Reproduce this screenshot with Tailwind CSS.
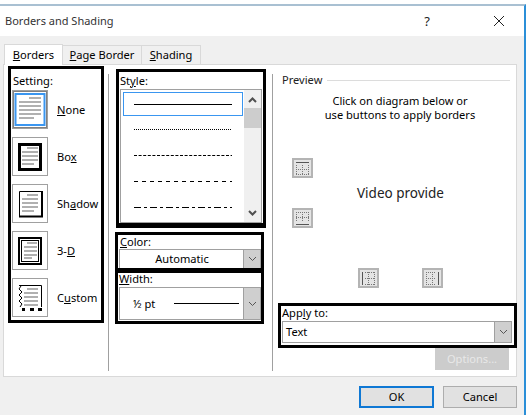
<!DOCTYPE html>
<html lang="en">
  <head>
    <meta charset="UTF-8" />
    <title>Borders and Shading</title>
    <script src="https://cdn.jsdelivr.net/npm/@tailwindcss/browser@4"></script>
  </head>
  <body class="bg-white overflow-hidden font-['Noto_Sans',sans-serif] text-[11.1px] leading-[14px] text-black">
    <div class="w-[527px] h-[415px] pt-[4px] overflow-hidden">
      <div class="w-[526px] h-[411px] border-t-2 border-r-2 border-t-[#a9c0d2] border-r-[#2b8fd8] flex flex-col">
        <!-- title bar -->
        <div class="h-[30px] flex items-center pl-[5px] bg-white shrink-0">
          <span class="text-[#333] text-[11px]">Borders and Shading</span>
          <span class="ml-auto mr-[63px] text-[#222] text-[13px]">?</span>
          <svg class="mr-[19px]" width="12" height="12" viewBox="0 0 12 12"><path d="M1 1 11 11M11 1 1 11" stroke="#222" stroke-width="1" fill="none" /></svg>
        </div>

        <div class="flex-1 bg-[#f0f0f0] flex flex-col">
          <!-- tabs -->
          <div class="h-[28px] flex items-end pl-[4px] shrink-0">
            <div class="w-[59px] h-[21px] bg-white border border-b-0 border-[#d9d9d9] flex items-center justify-center relative top-px z-10"><span><u>B</u>orders</span></div>
            <div class="w-[79px] h-[19px] border border-b-0 border-l-0 border-[#d9d9d9] flex items-center justify-center"><span><u>P</u>age Border</span></div>
            <div class="w-[59px] h-[19px] border border-b-0 border-l-0 border-[#d9d9d9] flex items-center justify-center"><span><u>S</u>hading</span></div>
          </div>

          <!-- panel -->
          <div class="ml-[3px] w-[514px] h-[313px] bg-white border border-[#d9d9d9] flex shrink-0">
            <!-- setting -->
            <div class="ml-[4px] mt-[1px] w-[96px] h-[257px] border-[3px] border-black px-[1px] shrink-0">
              <div class="h-[14px] mt-[5px] ml-[1px]">Setting:</div>
              <div class="mt-[2px] flex flex-col gap-[8px]">
                <div class="flex items-center">
                  <div class="w-[36px] h-[39px] border border-[#a0a0a0] bg-white">
                    <svg width="34" height="37" viewBox="0 0 34 37">
                      <rect x="0.5" y="0.5" width="33" height="36" fill="none" stroke="#000" stroke-dasharray="1 1" />
                      <rect x="2.5" y="3" width="29" height="31" fill="none" stroke="#3a96f0" stroke-width="2" />
                      <path d="M16 7h12M6 11h22M6 15h22M6 19h22M6 23h22M6 27h15" stroke="#b0b0b0" stroke-width="2" />
                    </svg>
                  </div>
                  <span class="ml-[9px]"><u>N</u>one</span>
                </div>
                <div class="flex items-center">
                  <div class="w-[36px] h-[39px] border border-[#a0a0a0] bg-white">
                    <svg width="34" height="37" viewBox="0 0 34 37">
                      <rect x="6.5" y="6.5" width="21" height="25" fill="none" stroke="#000" stroke-width="3" />
                      <path d="M14 10h11M9 14h16M9 18h16M9 22h16M9 26h12" stroke="#b0b0b0" stroke-width="2" />
                    </svg>
                  </div>
                  <span class="ml-[9px]">Bo<u>x</u></span>
                </div>
                <div class="flex items-center">
                  <div class="w-[36px] h-[39px] border border-[#a0a0a0] bg-white">
                    <svg width="34" height="37" viewBox="0 0 34 37">
                      <path d="M6.5 31V6.5H28" fill="none" stroke="#000" />
                      <path d="M6 31.5H29V6" fill="none" stroke="#000" stroke-width="2" />
                      <path d="M14 10h11M9 14h16M9 18h16M9 22h16M9 26h12" stroke="#b0b0b0" stroke-width="2" />
                    </svg>
                  </div>
                  <span class="ml-[9px]">Sh<u>a</u>dow</span>
                </div>
                <div class="flex items-center">
                  <div class="w-[36px] h-[39px] border border-[#a0a0a0] bg-white">
                    <svg width="34" height="37" viewBox="0 0 34 37">
                      <rect x="6" y="6" width="22" height="26" fill="none" stroke="#000" stroke-width="2" />
                      <rect x="8.5" y="8.5" width="17" height="21" fill="none" stroke="#000" />
                      <path d="M14 11h10M11 15h13M11 19h13M11 23h13M11 26h8" stroke="#b0b0b0" stroke-width="2" />
                    </svg>
                  </div>
                  <span class="ml-[9px]">3-<u>D</u></span>
                </div>
                <div class="flex items-center">
                  <div class="w-[36px] h-[39px] border border-[#a0a0a0] bg-white">
                    <svg width="34" height="37" viewBox="0 0 34 37">
                      <path d="M6 6.5H28.5V28" fill="none" stroke="#000" />
                      <path d="M8 7l-2 3 3 3-3 3 3 3-3 3 3 3-2 3" fill="none" stroke="#000" />
                      <path d="M9 29h3v3H9zM17 29h4v3h-4zM25 29h4v3h-4z" fill="#000" />
                      <path d="M14 10h11M11 14h14M11 18h14M11 22h14M11 26h14" stroke="#b0b0b0" stroke-width="2" />
                    </svg>
                  </div>
                  <span class="ml-[9px]">C<u>u</u>stom</span>
                </div>
              </div>
            </div>

            <div class="ml-[4px] mt-[9px] w-px h-[297px] bg-[#a0a0a0] shrink-0"></div>

            <!-- style, color, width -->
            <div class="ml-[6px] w-[151px] shrink-0">
              <div class="ml-[1px] mt-[4px] w-[150px] h-[159px] border-[3px] border-b-[5px] border-black px-[1px]">
                <div class="h-[14px] mt-[2px]">St<u>y</u>le:</div>
                <div class="mt-[1px] h-[134px] w-[142px] border border-[#a0a0a0] flex">
                  <div class="w-[123px] shrink-0 pt-[2px] pl-[2px]">
                    <div class="w-[120px] h-[24px] border border-[#3a96f0] flex items-center justify-center">
                      <svg width="98" height="1"><line x1="0" y1="0.5" x2="98" y2="0.5" stroke="#000" /></svg>
                    </div>
                    <div class="h-[26px] flex items-center justify-center w-[120px]">
                      <svg width="98" height="1"><line x1="0" y1="0.5" x2="98" y2="0.5" stroke="#000" stroke-dasharray="1 1" /></svg>
                    </div>
                    <div class="h-[26px] flex items-center justify-center w-[120px]">
                      <svg width="98" height="1"><line x1="0" y1="0.5" x2="98" y2="0.5" stroke="#000" stroke-dasharray="3 1.6" /></svg>
                    </div>
                    <div class="h-[26px] flex items-center justify-center w-[120px]">
                      <svg width="98" height="1"><line x1="0" y1="0.5" x2="98" y2="0.5" stroke="#000" stroke-dasharray="4 4" /></svg>
                    </div>
                    <div class="h-[26px] flex items-center justify-center w-[120px]">
                      <svg width="98" height="1"><line x1="0" y1="0.5" x2="98" y2="0.5" stroke="#000" stroke-dasharray="7 3 3 3" /></svg>
                    </div>
                  </div>
                  <div class="flex-1 bg-[#f0f0f0] flex flex-col">
                    <div class="h-[18px] flex items-center justify-center pt-[2px]">
                      <svg width="9" height="6" viewBox="0 0 9 6"><path d="M1 5 4.5 1.5 8 5" fill="none" stroke="#505050" stroke-width="2" /></svg>
                    </div>
                    <div class="h-[20px] bg-[#cdcdcd]"></div>
                    <div class="flex-1"></div>
                    <div class="h-[17px] mb-[1px] flex items-center justify-center">
                      <svg width="9" height="6" viewBox="0 0 9 6"><path d="M1 1 4.5 4.5 8 1" fill="none" stroke="#505050" stroke-width="2" /></svg>
                    </div>
                  </div>
                </div>
              </div>
              <div class="mt-[4px] w-[149px] h-[36px] border-[3px] border-black border-b-0 pl-[1px]">
                <div class="h-[14px] ml-[1px]"><u>C</u>olor:</div>
                <div class="h-[19px] w-[142px] border border-b-0 border-[#a0a0a0] flex">
                  <div class="flex-1 text-center leading-[18px] pl-[1px]">Automatic</div>
                  <div class="w-[17px] bg-[#cfcfcf] border-l border-[#a0a0a0] flex items-center justify-center">
                    <svg width="9" height="6" viewBox="0 0 9 6"><path d="M1 1 4.5 4.5 8 1" fill="none" stroke="#555" /></svg>
                  </div>
                </div>
              </div>
              <div class="w-[149px] h-[56px] border-[3px] border-black border-t-[5px] pl-[1px]">
                <div class="h-[15px] -mt-[1px]"><u>W</u>idth:</div>
                <div class="h-[33px] w-[142px] border border-[#a0a0a0] flex items-center">
                  <span class="ml-[13px] w-[41px]">½ pt</span>
                  <svg width="65" height="1"><line x1="0" y1="0.5" x2="65" y2="0.5" stroke="#000" /></svg>
                  <div class="ml-auto h-full w-[17px] bg-[#cfcfcf] border-l border-[#a0a0a0] flex items-center justify-center">
                    <svg width="9" height="6" viewBox="0 0 9 6"><path d="M1 1 4.5 4.5 8 1" fill="none" stroke="#555" /></svg>
                  </div>
                </div>
              </div>
            </div>

            <div class="ml-[6px] mt-[9px] w-px h-[297px] bg-[#a0a0a0] shrink-0"></div>

            <!-- preview -->
            <div class="flex-1 min-w-0">
              <div class="ml-[9px] mt-[8px] flex items-center h-[14px] mr-[6px]">
                <span class="text-[#222]">Preview</span>
                <div class="ml-[5px] flex-1 h-px bg-[#dcdcdc]"></div>
              </div>
              <div class="text-center mt-[7px] leading-[14px] w-[238px] ml-[8px]">Click on diagram below or<br />use buttons to apply borders</div>
              <div class="flex mt-[36px]">
                <div class="ml-[19px] flex flex-col gap-[30px]">
                  <div class="w-[21px] h-[20px] border-2 border-[#b4b4b4] bg-[#e4e4e4] flex items-center justify-center">
                    <svg width="13" height="13" viewBox="0 0 13 13"><path d="M.5 3V13M6.5 3V13M12.5 3V13M0 7.5H13M0 12.5H13" fill="none" stroke="#777" stroke-dasharray="1 1" /><path d="M0 .5H13" stroke="#555" /></svg>
                  </div>
                  <div class="w-[21px] h-[20px] border-2 border-[#b4b4b4] bg-[#e4e4e4] flex items-center justify-center">
                    <svg width="13" height="13" viewBox="0 0 13 13"><path d="M.5 0V10M6.5 0V10M12.5 0V10M0 .5H13M0 5.5H13" fill="none" stroke="#777" stroke-dasharray="1 1" /><path d="M0 12.5H13" stroke="#555" /></svg>
                  </div>
                </div>
                <div class="w-[175px] text-center text-[13.5px] leading-[18px] mt-[26px] text-[#222]">Video provide</div>
              </div>
              <div class="flex mt-[40px] ml-[85px] gap-[43px]">
                <div class="w-[21px] h-[20px] border-2 border-[#b4b4b4] bg-[#e4e4e4] flex items-center justify-center">
                  <svg width="13" height="13" viewBox="0 0 13 13"><path d="M3 .5H13M3 12.5H13M12.5 0V13M6.5 0V13M3 6.5H13" fill="none" stroke="#777" stroke-dasharray="1 1" /><path d="M.5 0V13" stroke="#555" /></svg>
                </div>
                <div class="w-[21px] h-[20px] border-2 border-[#b4b4b4] bg-[#e4e4e4] flex items-center justify-center">
                  <svg width="13" height="13" viewBox="0 0 13 13"><path d="M0 .5H10M0 12.5H10M.5 0V13M6.5 0V13M0 6.5H10" fill="none" stroke="#777" stroke-dasharray="1 1" /><path d="M12.5 0V13" stroke="#555" /></svg>
                </div>
              </div>
              <div class="ml-[5px] mt-[15px] w-[239px] h-[45px] border-[3px] border-black pl-[1px] pr-[2px]">
                <div class="h-[14px]">App<u>l</u>y to:</div>
                <div class="h-[22px] mt-[1px] border border-[#a0a0a0] flex items-center">
                  <span class="ml-[3px]">Text</span>
                  <div class="ml-auto h-full w-[17px] bg-[#cfcfcf] border-l border-[#a0a0a0] flex items-center justify-center">
                    <svg width="9" height="6" viewBox="0 0 9 6"><path d="M1 1 4.5 4.5 8 1" fill="none" stroke="#555" /></svg>
                  </div>
                </div>
              </div>
              <div class="ml-[162px] w-[74px] h-[22px] bg-[#cccccc] text-[#e8e8e8] flex items-center justify-center">Options...</div>
            </div>
          </div>

          <!-- footer -->
          <div class="flex mt-[9px] ml-[359px] gap-[9px]">
            <div class="w-[75px] h-[22px] border-2 border-[#0f78d4] bg-[#e1e1e1] flex items-center justify-center">OK</div>
            <div class="w-[74px] h-[22px] border border-[#adadad] bg-[#e1e1e1] flex items-center justify-center">Cancel</div>
          </div>
        </div>
      </div>
    </div>
  </body>
</html>
